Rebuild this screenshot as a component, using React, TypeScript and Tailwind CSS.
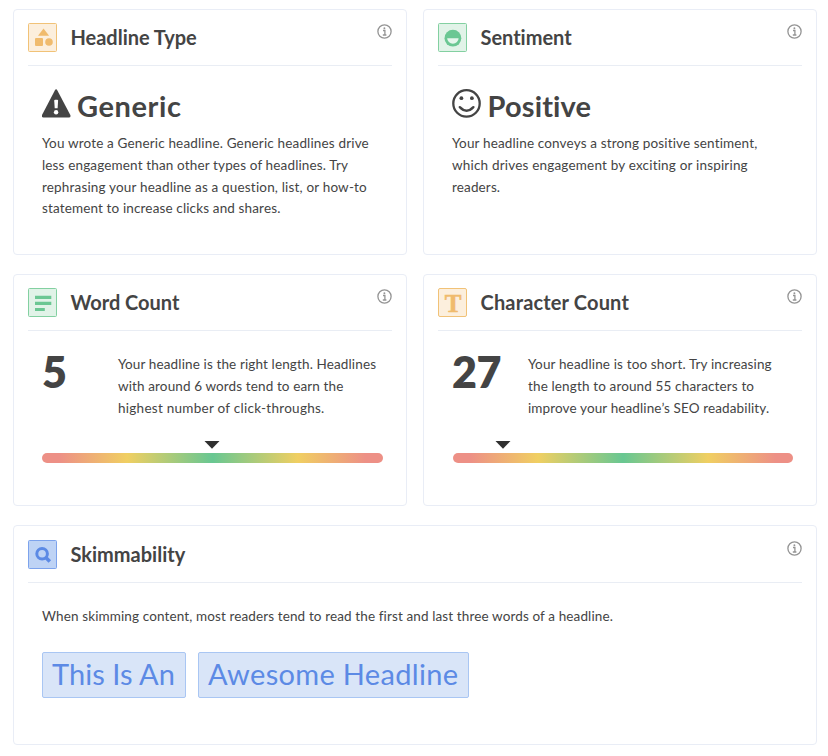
import type { ReactNode } from "react";

function InfoIcon() {
  return (
    <svg className="mt-[1px] h-[15px] w-[15px]" viewBox="0 0 15 15" fill="none">
      <circle cx="7.5" cy="7.5" r="6.6" stroke="#949494" strokeWidth="1.3" />
      <path d="M6 6.5h1.9V11M5.8 11h3.6" stroke="#949494" strokeWidth="1.3" />
      <circle cx="7.4" cy="4.3" r="0.95" fill="#949494" />
    </svg>
  );
}

function ShapesIcon() {
  return (
    <svg width="29" height="29" viewBox="0 0 29 29">
      <rect x="0.5" y="0.5" width="28" height="28" rx="1" fill="#fcefdd" stroke="#f1c277" />
      <g fill="#f0bb6d">
        <path d="M15.5 5.6l5.6 7.2H10z" />
        <rect x="7" y="15" width="8" height="8" rx="1" />
        <circle cx="21" cy="19" r="3.8" />
      </g>
    </svg>
  );
}

function SmileBadge() {
  return (
    <svg width="29" height="29" viewBox="0 0 29 29">
      <rect x="0.5" y="0.5" width="28" height="28" rx="1" fill="#e1f3e8" stroke="#83d0a1" />
      <circle cx="14.9" cy="15.2" r="8.4" fill="#6bc793" />
      <path d="M9.2 15.2h11.4a5.7 5.5 0 0 1-11.4 0z" fill="#e6f6ec" />
    </svg>
  );
}

function LinesIcon() {
  return (
    <svg width="29" height="29" viewBox="0 0 29 29">
      <rect x="0.5" y="0.5" width="28" height="28" rx="1" fill="#e1f3e8" stroke="#83d0a1" />
      <path d="M7 9.3h16.3M7 15.3h16.3M7 21.5h9.8" stroke="#6bc793" strokeWidth="3.2" />
    </svg>
  );
}

function LetterIcon() {
  return (
    <div className="flex h-[29px] w-[29px] items-center justify-center rounded-[2px] border border-[#f1c277] bg-[#fcefdd] pt-[2px] pl-[1px] font-['Liberation_Serif',serif] text-[25px] leading-none font-bold text-[#f0bb6d] [-webkit-text-stroke:0.6px_#f0bb6d]">
      T
    </div>
  );
}

function SearchIcon() {
  return (
    <svg width="29" height="29" viewBox="0 0 29 29" fill="none">
      <rect x="0.5" y="0.5" width="28" height="28" rx="1" fill="#bed3f5" stroke="#7da3ec" />
      <circle cx="14.1" cy="13.8" r="5.3" stroke="#5c8ae5" strokeWidth="3" />
      <path d="M17.8 17.6l4 4" stroke="#5c8ae5" strokeWidth="3.6" />
    </svg>
  );
}

function WarningIcon() {
  return (
    <svg width="30" height="29" viewBox="0 0 30 29">
      <path d="M12.8 1.4q1.3-2.1 2.6 0L28.3 26.1q.8 2.3-1.5 2.5H1.4Q-.9 28.4-.1 26.1z" fill="#444" />
      <path d="M12.2 11.7q0-1 1-1h1.9q1 0 1 1l-.5 7.6h-2.9z" fill="#fff" />
      <circle cx="14.1" cy="23.3" r="2.2" fill="#fff" />
    </svg>
  );
}

function SmileIcon() {
  return (
    <svg width="30" height="29" viewBox="0 0 30 29" fill="none">
      <circle cx="14.5" cy="14.4" r="13.2" stroke="#444" strokeWidth="2.3" />
      <circle cx="9.4" cy="9.2" r="1.9" fill="#444" />
      <circle cx="19.9" cy="9.2" r="1.9" fill="#444" />
      <path d="M7.8 18.2q6.8 7 13.6 0" stroke="#444" strokeWidth="2.4" strokeLinecap="round" />
    </svg>
  );
}

type CardProps = {
  icon: ReactNode;
  title: string;
  titleClass: string;
  headerClass?: string;
  className: string;
  children: ReactNode;
};

function Card({ icon, title, titleClass, headerClass = "h-14 pt-[13px]", className, children }: CardProps) {
  return (
    <section className={`rounded-[4px] border border-[#e9edf6] px-[14px] ${className}`}>
      <header className={`flex items-start justify-between border-b border-[#e9edf4] ${headerClass}`}>
        <div className="flex items-center gap-[13.5px]">
          {icon}
          <h2 className={`text-[20px] leading-[29px] font-bold whitespace-nowrap ${titleClass}`}>{title}</h2>
        </div>
        <InfoIcon />
      </header>
      {children}
    </section>
  );
}

function Line({ className, children }: { className: string; children: ReactNode }) {
  return <span className={`block whitespace-nowrap ${className}`}>{children}</span>;
}

function Meter({ className, markerClass }: { className: string; markerClass: string }) {
  return (
    <div className={`mt-[22px] ${className}`}>
      <div className={`h-[8px] ${markerClass}`}>
        <svg width="16" height="8" viewBox="0 0 16 8">
          <path d="M.5 0h15L8 7.7z" fill="#303030" />
        </svg>
      </div>
      <div className="mt-[4px] h-[10px] rounded-full bg-[linear-gradient(90deg,#ed9086_0%,#ed9086_5%,#f0cf62_25%,#68c792_50%,#f0cf62_75%,#ed9086_95%,#ed9086_100%)]" />
    </div>
  );
}

export default function App() {
  return (
    <main className="h-[756px] w-[828px] bg-white pt-[9px] pl-[13px] font-[Lato,sans-serif] text-[#444]">
      <div className="grid w-[804px] grid-cols-2 gap-x-4 gap-y-[19px]">
        <Card icon={<ShapesIcon />} title="Headline Type" titleClass="tracking-[-0.02px]" className="h-[246px]">
          <div className="pt-[23px] pl-[14px]">
            <div className="flex items-start gap-[5px]">
              <WarningIcon />
              <h3 className="text-[29px] leading-[34px] font-bold tracking-[0.6px]">Generic</h3>
            </div>
            <p className="mt-[10px] text-[13.5px] leading-[21.8px]">
              <Line className="tracking-[0.158px]">You wrote a Generic headline. Generic headlines drive</Line>
              <Line className="tracking-[0.148px]">less engagement than other types of headlines. Try</Line>
              <Line className="tracking-[0.176px]">rephrasing your headline as a question, list, or how-to</Line>
              <Line className="tracking-[0.14px]">statement to increase clicks and shares.</Line>
            </p>
          </div>
        </Card>

        <Card icon={<SmileBadge />} title="Sentiment" titleClass="tracking-[-0.02px]" className="h-[246px]">
          <div className="pt-[23px] pl-[14px]">
            <div className="flex items-start gap-[5.5px]">
              <SmileIcon />
              <h3 className="text-[29px] leading-[34px] font-bold tracking-[0.15px]">Positive</h3>
            </div>
            <p className="mt-[10px] text-[13.5px] leading-[21.8px]">
              <Line className="tracking-[0.15px]">Your headline conveys a strong positive sentiment,</Line>
              <Line className="tracking-[0.19px]">which drives engagement by exciting or inspiring</Line>
              <Line className="tracking-[0.14px]">readers.</Line>
            </p>
          </div>
        </Card>

        <Card icon={<LinesIcon />} title="Word Count" titleClass="tracking-[-0.02px]" className="h-[232px]">
          <div className="flex pt-[23px] pl-[14px]">
            <div className="w-[76px] text-[43px] leading-[35px] font-extrabold">5</div>
            <p className="text-[13.5px] leading-[21.8px]">
              <Line className="tracking-[0.13px]">Your headline is the right length. Headlines</Line>
              <Line className="tracking-[0.12px]">with around 6 words tend to earn the</Line>
              <Line className="tracking-[0.27px]">highest number of click-throughs.</Line>
            </p>
          </div>
          <Meter className="mr-[9px] ml-[14px]" markerClass="pl-[162px]" />
        </Card>

        <Card icon={<LetterIcon />} title="Character Count" titleClass="tracking-[0.16px]" className="h-[232px]">
          <div className="flex pt-[23px] pl-[14px]">
            <div className="w-[76px] text-[43px] leading-[35px] font-extrabold tracking-[-0.5px]">27</div>
            <p className="text-[13.5px] leading-[21.8px]">
              <Line className="tracking-[0.146px]">Your headline is too short. Try increasing</Line>
              <Line className="tracking-[0.14px]">the length to around 55 characters to</Line>
              <Line className="tracking-[0.12px]">improve your headline’s SEO readability.</Line>
            </p>
          </div>
          <Meter className="mr-[9px] ml-[15px]" markerClass="pl-[42px]" />
        </Card>

        <Card
          icon={<SearchIcon />}
          title="Skimmability"
          titleClass="tracking-[0px]"
          headerClass="h-[57px] pt-[14px]"
          className="col-span-2 h-[220px]"
        >
          <div className="pt-[22px] pl-[14px]">
            <p className="text-[13.5px] leading-[22px]">
              <Line className="tracking-[0.123px]">When skimming content, most readers tend to read the first and last three words of a headline.</Line>
            </p>
            <div className="mt-[25px] flex gap-3 text-[29px] leading-[42px] whitespace-nowrap text-[#5c8ae5]">
              <span className="h-[46px] w-[144px] rounded-[2px] border border-[#a9c6f3] bg-[#d9e5f8] pl-[9px] tracking-[0.05px]">This Is An</span>
              <span className="h-[46px] w-[271px] rounded-[2px] border border-[#a9c6f3] bg-[#d9e5f8] pl-[9px] tracking-[0.32px]">Awesome Headline</span>
            </div>
          </div>
        </Card>
      </div>
    </main>
  );
}
